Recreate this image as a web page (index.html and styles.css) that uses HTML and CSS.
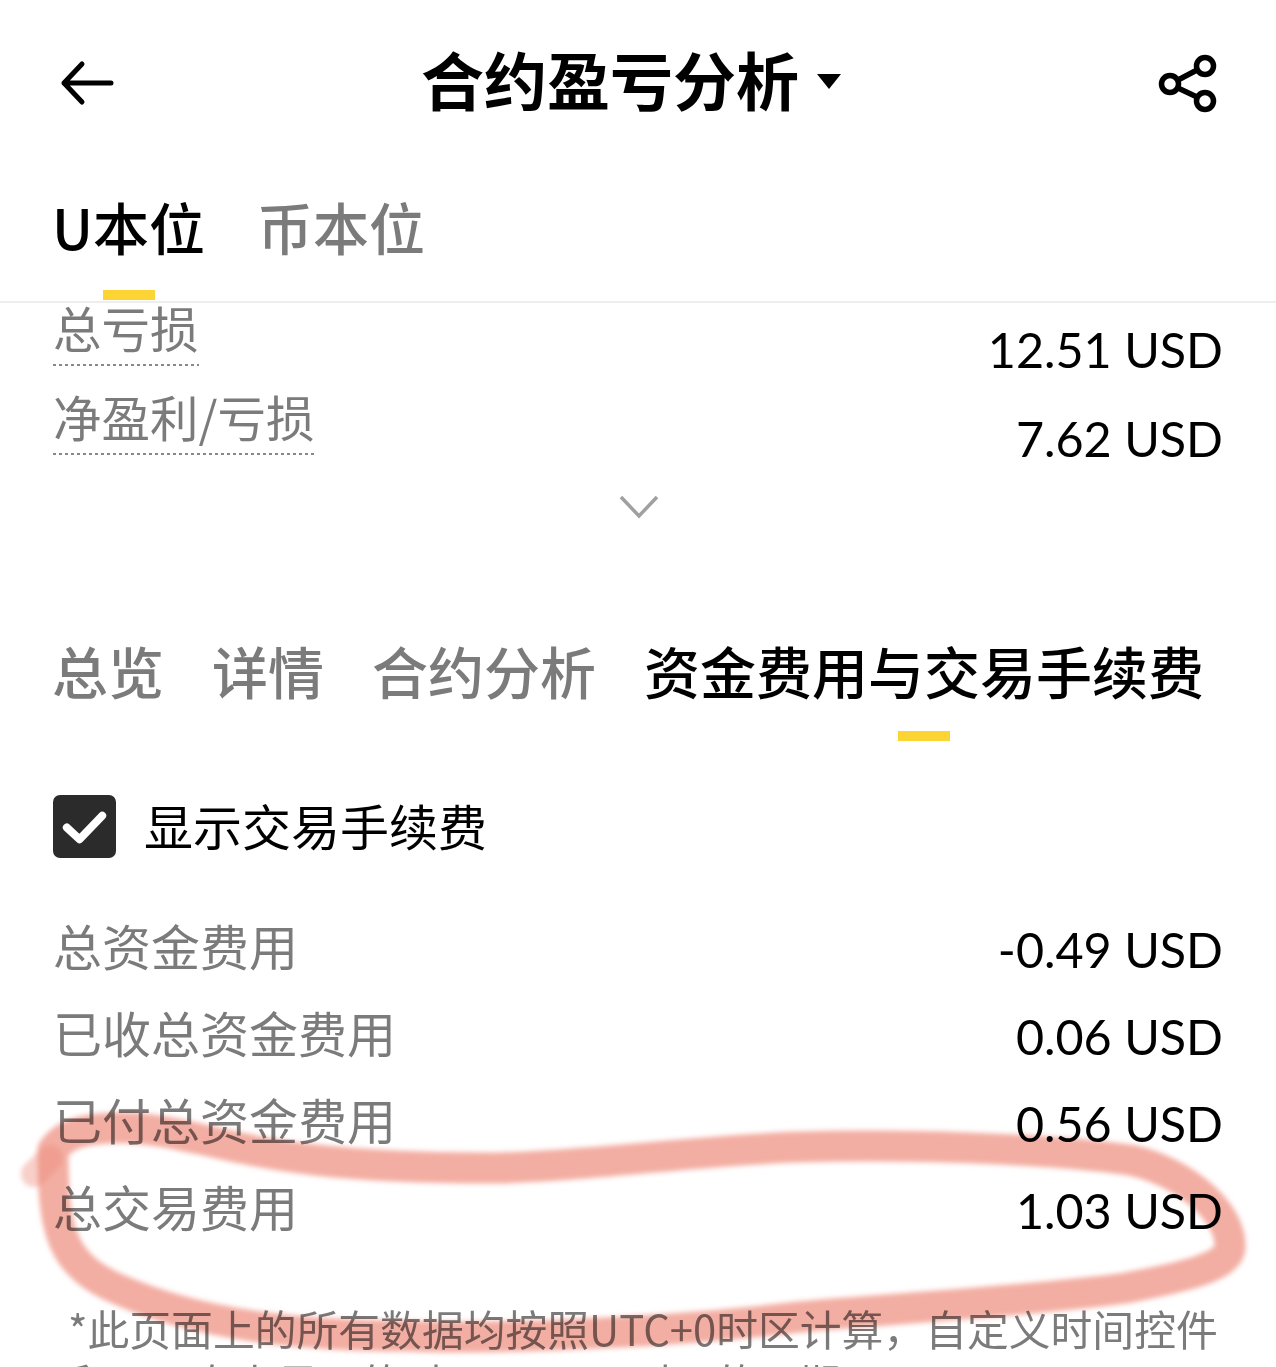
FILE: index.html
```html
<!DOCTYPE html>
<html lang="zh-CN">
<head>
    <meta charset="UTF-8">
    <meta name="viewport" content="width=device-width, initial-scale=1.0">
    <title>合约盈亏分析</title>
    <link rel="stylesheet" href="styles.css">
</head>
<body>
    <div class="page">
        <header class="topbar">
            <svg class="icon-back" viewBox="0 0 54 48" width="54" height="48">
                <path d="M51 24H4M22 5L4 24l18 19" fill="none" stroke="#000" stroke-width="5" stroke-linecap="round" stroke-linejoin="round"/>
            </svg>
            <h1 class="title">合约盈亏分析<span class="caret"></span></h1>
            <svg class="icon-share" viewBox="0 0 60 60" width="60" height="60">
                <g fill="none" stroke="#000" stroke-width="5.5">
                    <circle cx="12" cy="30" r="8.5"/>
                    <circle cx="47" cy="12" r="8.5"/>
                    <circle cx="47" cy="47" r="8.5"/>
                    <path d="M20 26L39 16M20 34L39 43"/>
                </g>
            </svg>
        </header>

        <nav class="unit-tabs">
            <a class="unit-tab active">U本位</a>
            <a class="unit-tab">币本位</a>
        </nav>

        <section class="summary">
            <div class="summary-row">
                <span class="dotted">总亏损</span>
                <span class="value">12.51 USD</span>
            </div>
            <div class="summary-row">
                <span class="dotted">净盈利/亏损</span>
                <span class="value">7.62 USD</span>
            </div>
            <svg class="icon-more" viewBox="0 0 40 26" width="40" height="26">
                <path d="M2 3l18 19L38 3" fill="none" stroke="#a0a0a0" stroke-width="3.5"/>
            </svg>
        </section>

        <nav class="detail-tabs">
            <a class="detail-tab">总览</a>
            <a class="detail-tab">详情</a>
            <a class="detail-tab">合约分析</a>
            <a class="detail-tab active">资金费用与交易手续费</a>
        </nav>

        <label class="fee-toggle">
            <span class="checkbox">
                <svg viewBox="0 0 64 64" width="63" height="63">
                    <path d="M14 33l13 12 23-24" fill="none" stroke="#fff" stroke-width="8" stroke-linecap="round" stroke-linejoin="round"/>
                </svg>
            </span>
            <span class="toggle-text">显示交易手续费</span>
        </label>

        <section class="fees">
            <div class="fee-row"><span class="label">总资金费用</span><span class="value">-0.49 USD</span></div>
            <div class="fee-row"><span class="label">已收总资金费用</span><span class="value">0.06 USD</span></div>
            <div class="fee-row"><span class="label">已付总资金费用</span><span class="value">0.56 USD</span></div>
            <div class="fee-row"><span class="label">总交易费用</span><span class="value">1.03 USD</span></div>
        </section>

        <p class="note">*此页面上的所有数据均按照UTC+0时区计算，自定义时间控件和页面右上显示的时区 UTC+0 时区的日期</p>

        <!-- hand drawn circle on top of the screenshot -->
        <svg class="scribble" viewBox="0 0 1276 1367" width="1276" height="1367">
            <defs>
                <filter id="soft"><feGaussianBlur stdDeviation="2.4"/></filter>
            </defs>
            <g fill="none" stroke="#ee8877" stroke-linecap="round" stroke-linejoin="round" filter="url(#soft)">
                <path opacity="0.68" stroke-width="31" d="M53 1150C62 1138 72 1133 90 1130C125 1124 160 1130 204 1140C270 1156 340 1168 490 1168C570 1168 700 1150 799 1147C900 1144 1040 1148 1130 1160C1180 1170 1232 1210 1230 1248C1228 1266 1190 1276 1126 1288C1040 1300 900 1308 799 1317C690 1330 520 1340 408 1336C300 1336 200 1325 120 1290C60 1265 53 1230 53 1150"/>
                <path opacity="0.4" stroke-width="26" d="M34 1174L50 1158"/>
            </g>
        </svg>
    </div>
</body>
</html>
```

FILE: styles.css
```css
html, body {
    margin: 0;
    padding: 0;
    background: #fff;
}

.page {
    position: relative;
    width: 1276px;
    height: 1367px;
    overflow: hidden;
    font-family: "Noto Sans CJK SC", "Noto Sans", sans-serif;
    color: #7b7b7b;
}

.topbar {
    display: flex;
    align-items: center;
    justify-content: space-between;
    height: 166px;
    padding: 0 58px 0 60px;
}

.icon-share {
    margin-top: 2px;
}

.title {
    margin: 0 10px 12px 0;
    font-size: 63px;
    line-height: 1;
    font-weight: 700;
    color: #000;
    display: flex;
    align-items: center;
}

.caret {
    width: 0;
    height: 0;
    margin: 8px 0 0 18px;
    border-left: 12px solid transparent;
    border-right: 12px solid transparent;
    border-top: 15px solid #000;
}

.unit-tabs {
    display: flex;
    gap: 52px;
    height: 135px;
    padding: 0 52px;
    border-bottom: 2px solid #eee;
    position: relative;
    z-index: 1;
}

.unit-tab {
    position: relative;
    font-size: 56px;
    line-height: 120px;
    height: 134px;
    font-weight: 500;
}

.unit-tab.active {
    color: #000;
}

.unit-tab.active::after {
    content: "";
    position: absolute;
    left: 50%;
    bottom: 0;
    width: 52px;
    height: 10px;
    margin-left: -26px;
    background: #fcd535;
}

.summary {
    padding: 0 53px 0 54px;
    height: 330px;
}

.summary-row {
    display: flex;
    justify-content: space-between;
    height: 89px;
}

.dotted {
    font-size: 48.5px;
    line-height: 48px;
    height: 61px;
    margin-left: -1px;
    padding-bottom: 2px;
    background: repeating-linear-gradient(90deg, #888 0 3px, transparent 3px 6px) left bottom / 100% 2px no-repeat;
}

.value {
    font-family: Lato, "Noto Sans", sans-serif;
    font-size: 48.5px;
    color: #000;
}

.summary-row .value {
    line-height: 92px;
}

.icon-more {
    display: block;
    margin: 13px auto 0;
}

.detail-tabs {
    display: flex;
    gap: 48px;
    height: 109px;
    padding: 0 52px;
}

.detail-tab {
    position: relative;
    font-size: 56px;
    line-height: 74px;
    font-weight: 500;
}

.detail-tab.active {
    color: #000;
}

.detail-tab.active::after {
    content: "";
    position: absolute;
    left: 50%;
    bottom: 1px;
    width: 52px;
    height: 10px;
    margin-left: -26px;
    background: #fcd535;
}

.fee-toggle {
    display: flex;
    align-items: center;
    gap: 28px;
    margin-top: 53px;
    padding: 0 53px;
    font-size: 49px;
    line-height: 59px;
    color: #000;
}

.toggle-text {
    margin-bottom: 4px;
}

.checkbox {
    display: block;
    width: 63px;
    height: 63px;
    border-radius: 7px;
    background: #2b2b2b;
}

.checkbox svg {
    display: block;
}

.fees {
    margin-top: 47px;
    padding: 0 53px;
}

.fee-row {
    display: flex;
    justify-content: space-between;
    align-items: center;
    height: 87px;
}

.label {
    font-size: 49px;
    line-height: 60px;
    margin-bottom: 8px;
}

.note {
    margin: 48px 0 0;
    padding: 0 40px 0 68px;
    font-size: 41.8px;
    line-height: 54px;
}

.scribble {
    position: absolute;
    left: 0;
    top: 0;
    pointer-events: none;
    mix-blend-mode: multiply;
}
```
